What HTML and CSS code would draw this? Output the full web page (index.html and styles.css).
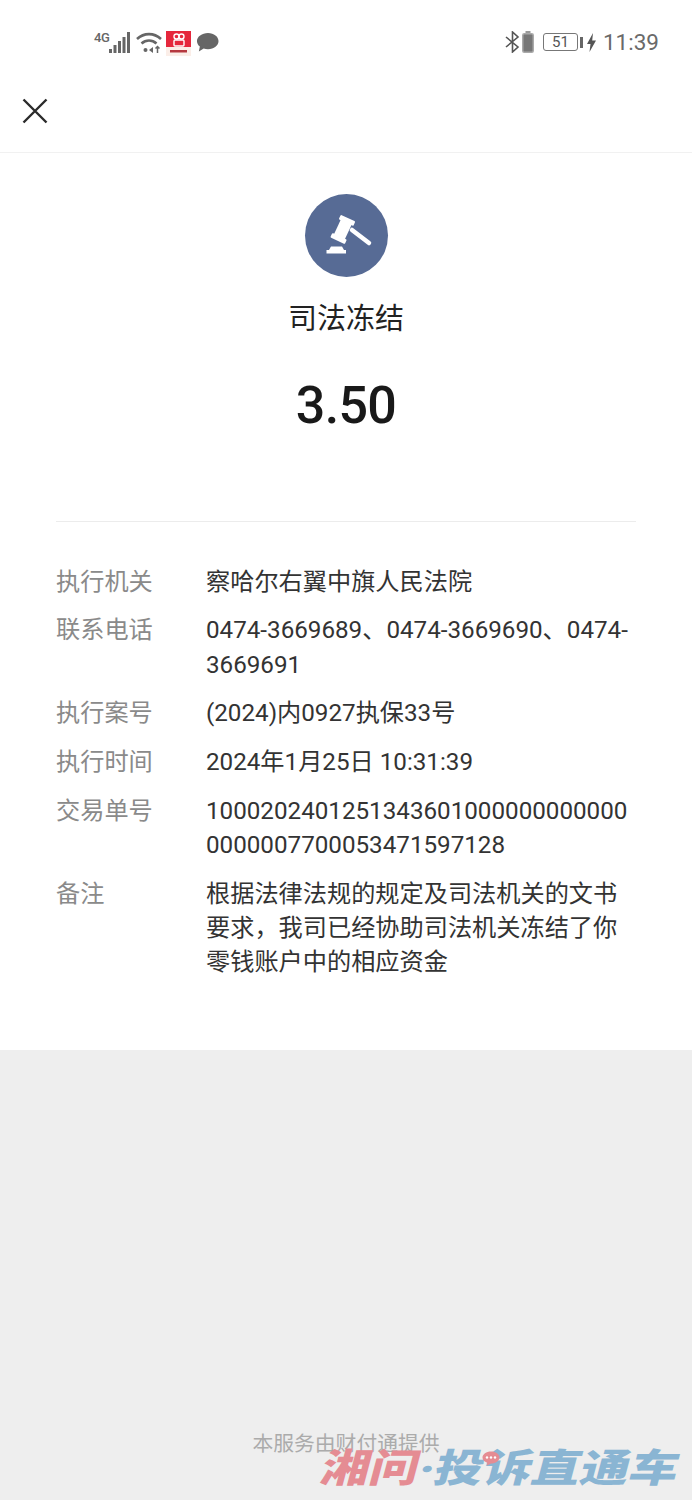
FILE: index.html
```html
<!DOCTYPE html>
<html lang="zh-CN">
<head>
  <meta charset="UTF-8" />
  <meta name="viewport" content="width=device-width, initial-scale=1.0" />
  <title>司法冻结</title>
  <link rel="stylesheet" href="styles.css">
</head>
<body>
  <div class="statusbar">
    <div class="status-left">
      <span class="net">4G</span>
      <svg class="signal" width="22" height="21" viewBox="0 0 22 21">
        <rect x="1" y="17" width="3" height="4" fill="#666"/>
        <rect x="5.500" y="13" width="3" height="8" fill="#666"/>
        <rect x="10" y="9" width="3" height="12" fill="#666"/>
        <rect x="14.500" y="5" width="3" height="16" fill="#666"/>
        <rect x="19" y="0" width="3" height="21" fill="#666"/>
      </svg>
      <svg class="wifi" width="26" height="21" viewBox="0 0 26 21" fill="none" stroke="#666" stroke-width="2.600">
        <path d="M1 7C8 .5 18 .5 25 7"/>
        <path d="M5.500 11.500C10 7.500 16 7.500 20.500 11.500"/>
        <circle cx="9.500" cy="18" r="2" fill="#666" stroke="none"/>
        <path d="M13 18l4-3v6z" fill="#666" stroke="none"/>
        <path d="M21.500 21v-6.500M19.500 16.500l2-2 2 2" stroke-width="1.500"/>
      </svg>
      <svg class="appicon" width="25" height="25" viewBox="0 0 25 25">
        <rect width="25" height="25" fill="#fbeee8"/>
        <rect width="25" height="16" fill="#e5273c"/>
        <circle cx="10.500" cy="5.500" r="2.500" fill="none" stroke="#fff" stroke-width="1.400"/>
        <circle cx="15.500" cy="5.500" r="2.500" fill="none" stroke="#fff" stroke-width="1.400"/>
        <rect x="8" y="9" width="10" height="6" rx="1" fill="none" stroke="#fff" stroke-width="1.400"/>
        <rect x="4" y="19" width="17" height="2.500" fill="#b5383f"/>
      </svg>
      <svg class="chat" width="23" height="21" viewBox="0 0 24 21">
        <path d="M12.500 0.500C18.800 0.500 23.500 4.300 23.500 9S18.800 17.500 12.500 17.500C10.800 17.500 9.400 17.300 8 16.700L3 20 4 14.800C2.100 13.300 1 11.300 1 9 1 4.300 6.200 0.500 12.500 0.500Z" fill="#666"/>
      </svg>
    </div>
    <div class="status-right">
      <svg class="bt" width="15" height="22" viewBox="0 0 15 22" fill="none" stroke="#555" stroke-width="1.600">
        <path d="M1 6l12 10-5.500 5V1L13 6 1 16"/>
      </svg>
      <svg class="vib" width="12" height="22" viewBox="0 0 12 22">
        <rect x="3.500" y="0" width="5" height="2" fill="#999"/>
        <rect x="0.750" y="2.750" width="10.500" height="18.500" rx="1.500" fill="#777" stroke="#aaa" stroke-width="1.500"/>
      </svg>
      <div class="battery"><span class="battery-num">51</span></div>
      <span class="battery-cap"></span>
      <svg class="bolt" width="9" height="19" viewBox="0 0 9 19">
        <path d="M6 0L0 11h3.500L2.500 19 9 7.500H5.200Z" fill="#555"/>
      </svg>
      <span class="clock">11:39</span>
    </div>
  </div>

  <div class="topbar">
    <svg class="close" width="26" height="26" viewBox="0 0 26 26" fill="none" stroke="#2b2b2b" stroke-width="2.400">
      <path d="M1.500 1.500l23 23M24.500 1.500l-23 23"/>
    </svg>
  </div>

  <div class="detail">
    <div class="head">
      <div class="badge">
        <svg width="83" height="83" viewBox="0 0 83 83" fill="#fff">
          <g transform="rotate(25 38 35)">
            <rect x="32" y="25" width="12" height="21"/>
            <rect x="30" y="23" width="16" height="5" rx="1"/>
            <rect x="30" y="43" width="16" height="5" rx="1"/>
          </g>
          <path d="M47 36L64 49" fill="none" stroke="#fff" stroke-width="4.500" stroke-linecap="round"/>
          <path d="M26 52.500h11l2 3.500H24z"/>
          <rect x="21.500" y="56" width="19.500" height="3.500"/>
        </svg>
      </div>
      <div class="title">司法冻结</div>
      <div class="amount">3.50</div>
    </div>

    <div class="rows">
      <div class="row">
        <div class="label">执行机关</div>
        <div class="value">察哈尔右翼中旗人民法院</div>
      </div>
      <div class="row">
        <div class="label">联系电话</div>
        <div class="value">0474-3669689、0474-3669690、0474-3669691</div>
      </div>
      <div class="row">
        <div class="label">执行案号</div>
        <div class="value">(2024)内0927执保33号</div>
      </div>
      <div class="row">
        <div class="label">执行时间</div>
        <div class="value">2024年1月25日 10:31:39</div>
      </div>
      <div class="row">
        <div class="label">交易单号</div>
        <div class="value long">10002024012513436010000000000000000007700053471597128</div>
      </div>
      <div class="row">
        <div class="label">备注</div>
        <div class="value">根据法律法规的规定及司法机关的文书要求，我司已经协助司法机关冻结了你零钱账户中的相应资金</div>
      </div>
    </div>
  </div>

  <div class="footer">
    <div class="provider">本服务由财付通提供</div>
    <div class="watermark"><span class="wm-red">湘问</span><span class="wm-blue">·投诉直通车</span></div>
    <svg class="wm-bubble" width="18" height="15" viewBox="0 0 18 15">
      <path d="M9 0.500C13.700 0.500 17.500 3.200 17.500 6.500S13.700 12.500 9 12.500L5 14.500 5.300 11.800C2.300 10.800 .5 8.800 .5 6.500 .5 3.200 4.300 .5 9 .5Z" fill="#e58c93"/>
      <circle cx="5" cy="6.500" r="1.200" fill="#fff"/>
      <circle cx="9" cy="6.500" r="1.200" fill="#fff"/>
      <circle cx="13" cy="6.500" r="1.200" fill="#fff"/>
    </svg>
  </div>
</body>
</html>
```

FILE: styles.css
```css
* {
  box-sizing: border-box;
}
html, body {
  height: 100%;
}
body {
  margin: 0;
  display: flex;
  flex-direction: column;
  height: 1500px;
  overflow: hidden;
  background-color: #eeeeee;
  color: #191919;
  font-family: Roboto, "Noto Sans CJK SC", sans-serif;
}
.statusbar {
  height: 85px;
  flex: none;
  background: #fff;
  display: flex;
  justify-content: space-between;
  align-items: flex-start;
  padding: 31px 33px 0 94px;
}
.status-left, .status-right {
  display: flex;
  align-items: flex-start;
  height: 26px;
}
.net {
  font-size: 13px;
  line-height: 14px;
  font-weight: 500;
  letter-spacing: -0.5px;
  color: #666;
}
.signal {
  margin-left: -1px;
  margin-top: 1px;
}
.wifi {
  margin-left: 6px;
  margin-top: 1px;
}
.appicon {
  margin-left: 4px;
}
.chat {
  margin-left: 5px;
  margin-top: 1px;
}
.status-right {
  align-items: center;
  height: 22px;
}
.bt {
  margin-right: 2px;
}
.vib {
  margin-right: 9px;
}
.battery {
  width: 35px;
  height: 18px;
  border: 1px solid #777;
  border-radius: 3px;
  display: flex;
  align-items: center;
  justify-content: center;
}
.battery-num {
  font-size: 15px;
  color: #555;
}
.battery-cap {
  width: 3px;
  height: 11px;
  background: #666;
  margin-left: 2px;
}
.bolt {
  margin-left: 4px;
}
.clock {
  font-size: 22.500px;
  color: #6a6a6a;
  margin-left: 7px;
}
.topbar {
  height: 68px;
  flex: none;
  background: #fff;
  border-bottom: 1px solid #f1f1f1;
  padding: 13px 0 0 22px;
}
.close {
  display: block;
}
.detail {
  height: 897px;
  flex: none;
  background: #fff;
  padding: 0 56px;
}
.head {
  height: 369px;
  border-bottom: 1px solid #ececec;
  display: flex;
  flex-direction: column;
  align-items: center;
  padding-top: 41px;
}
.badge {
  width: 83px;
  height: 83px;
  flex: none;
  border-radius: 50%;
  background: #576b95;
}
.badge svg {
  display: block;
}
.title {
  margin-top: 22px;
  font-size: 29px;
  line-height: 40px;
  color: #222;
}
.amount {
  margin-top: 37px;
  font-size: 52px;
  line-height: 60px;
  font-weight: 500;
  letter-spacing: -0.700px;
}
.rows {
  padding-top: 42.700px;
  display: flex;
  flex-direction: column;
  gap: 14.400px;
}
.row {
  display: flex;
  font-size: 24.200px;
  line-height: 34.300px;
}
.label {
  width: 150px;
  flex: none;
  color: #8a8a8a;
}
.value {
  flex: 1;
  color: #333;
}
.long {
  word-break: break-all;
}
.footer {
  flex: 1;
  position: relative;
}
.provider {
  position: absolute;
  left: 0;
  right: 0;
  top: 380px;
  text-align: center;
  font-size: 20.800px;
  line-height: 28px;
  color: #ababab;
}
.watermark {
  position: absolute;
  left: 322px;
  top: 394px;
  font-size: 39px;
  line-height: 50px;
  font-weight: 900;
  white-space: nowrap;
  transform-origin: left center;
  transform: scaleX(1.25) skewX(-12deg);
}
.wm-red {
  color: #e58c93;
}
.wm-blue {
  color: #8ab5d3;
}
.wm-bubble {
  position: absolute;
  left: 482px;
  top: 401px;
}
```
